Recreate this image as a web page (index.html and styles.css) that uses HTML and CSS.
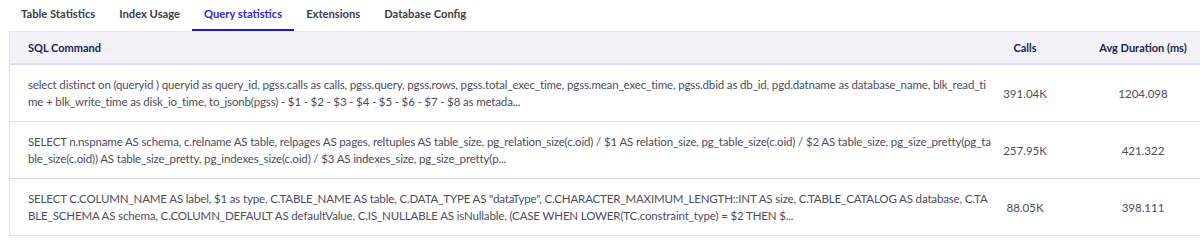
FILE: index.html
```html
<!DOCTYPE html>
<html lang="en">
<head>
<meta charset="utf-8">
<title>Query statistics</title>
<link rel="stylesheet" href="styles.css">
</head>
<body>
<nav class="tabs">
  <div class="tab">Table Statistics</div>
  <div class="tab">Index Usage</div>
  <div class="tab active">Query statistics</div>
  <div class="tab">Extensions</div>
  <div class="tab">Database Config</div>
</nav>
<div class="table">
  <div class="row head">
    <div class="cell sql">SQL Command</div>
    <div class="cell num">Calls</div>
    <div class="cell num dur">Avg Duration (ms)</div>
  </div>
  <div class="row body">
    <div class="cell sql">select distinct on (queryid ) queryid as query_id, pgss.calls as calls, pgss.query, pgss.rows, pgss.total_exec_time, pgss.mean_exec_time, pgss.dbid as db_id, pgd.datname as database_name, blk_read_time + blk_write_time as disk_io_time, to_jsonb(pgss) - $1 - $2 - $3 - $4 - $5 - $6 - $7 - $8 as metada...</div>
    <div class="cell num">391.04K</div>
    <div class="cell num dur">1204.098</div>
  </div>
  <div class="row body">
    <div class="cell sql">SELECT n.nspname AS schema, c.relname AS table, relpages AS pages, reltuples AS table_size, pg_relation_size(c.oid) / $1 AS relation_size, pg_table_size(c.oid) / $2 AS table_size, pg_size_pretty(pg_table_size(c.oid)) AS table_size_pretty, pg_indexes_size(c.oid) / $3 AS indexes_size, pg_size_pretty(p...</div>
    <div class="cell num">257.95K</div>
    <div class="cell num dur">421.322</div>
  </div>
  <div class="row body">
    <div class="cell sql">SELECT C.COLUMN_NAME AS label, $1 as type, C.TABLE_NAME AS table, C.DATA_TYPE AS "dataType", C.CHARACTER_MAXIMUM_LENGTH::INT AS size, C.TABLE_CATALOG AS database, C.TABLE_SCHEMA AS schema, C.COLUMN_DEFAULT AS defaultValue, C.IS_NULLABLE AS isNullable, (CASE WHEN LOWER(TC.constraint_type) = $2 THEN $...</div>
    <div class="cell num">88.05K</div>
    <div class="cell num dur">398.111</div>
  </div>
</div>
</body>
</html>
```

FILE: styles.css
```css
html, body {
  margin: 0;
  padding: 0;
  background: #ffffff;
}

body {
  font-family: "Lato", "Open Sans", sans-serif;
  color: #4d4d5b;
  overflow: hidden;
}

.tabs {
  display: flex;
  padding-left: 9px;
  height: 31px;
}

.tab {
  padding: 0 12px;
  height: 29px;
  line-height: 28px;
  font-size: 11.2px;
  font-weight: 700;
  color: #3c3c4a;
  border-bottom: 2px solid transparent;
}

.tab.active {
  color: #2b2bcc;
  border-bottom-color: #1f1fa6;
}

.table {
  margin-left: 9px;
  border-left: 1px solid #e3e3f1;
}

.row {
  display: grid;
  grid-template-columns: 985px 60px 1fr;
  align-items: center;
}

.head {
  height: 31px;
  background: #f1f1f7;
  border-top: 1px solid #e7e7f3;
  border-bottom: 2px solid #dcdcf3;
  font-size: 11px;
  font-weight: 700;
  color: #1f1f4d;
}

.body {
  padding: 11px 0;
  border-bottom: 1px solid #dcdcf0;
  font-size: 11.5px;
  line-height: 17px;
  letter-spacing: -0.15px;
}

.cell.sql {
  padding-left: 18px;
  padding-right: 4px;
  word-break: break-all;
}

.cell.num {
  text-align: center;
  letter-spacing: 0;
}

.cell.dur {
  padding-left: 31px;
}
```
